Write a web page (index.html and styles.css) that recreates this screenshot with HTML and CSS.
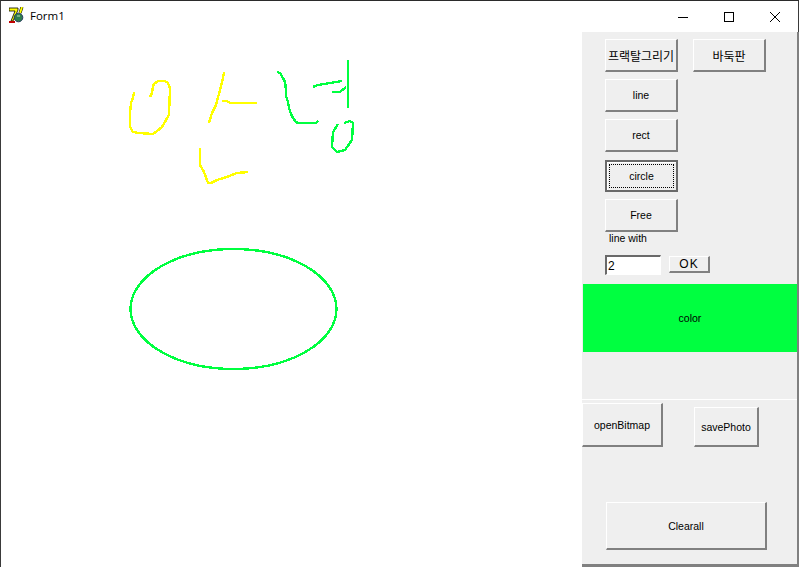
FILE: index.html
```html
<!DOCTYPE html>
<html>
    <head>
        <title>Form1</title>
        <link rel="stylesheet" href="styles.css">
    </head>
    <body>
        <div class="window">
            <div class="titleBar">
                <svg class="appIcon" width="17" height="17" viewBox="0 0 17 17">
                    <path d="M0 1H9V3L4 14H2L6 4H0Z" fill="#ffff00" stroke="#000" stroke-width="0.8" />
                    <path d="M0 15H6" stroke="#c00000" stroke-width="2" />
                    <path d="M13 0L11 6" stroke="#000" stroke-width="3" />
                    <path d="M13 0L11 6" stroke="#ffff00" stroke-width="2" />
                    <circle cx="9.5" cy="10.5" r="4.3" fill="#2f7f4f" stroke="#2a3a60" stroke-width="1" />
                    <path d="M8 9H11" stroke="#90c090" stroke-width="1.5" />
                </svg>
                <span class="titleText">Form1</span>
                <div class="winButtons">
                    <div class="winBtn">
                        <svg width="12" height="12" viewBox="0 0 12 12"><path d="M1 6.5H11" stroke="#000" /></svg>
                    </div>
                    <div class="winBtn">
                        <svg width="12" height="12" viewBox="0 0 12 12"><rect x="1.5" y="1.5" width="9" height="9" fill="none" stroke="#000" /></svg>
                    </div>
                    <div class="winBtn">
                        <svg width="12" height="12" viewBox="0 0 12 12"><path d="M1 1L11 11M11 1L1 11" stroke="#000" /></svg>
                    </div>
                </div>
            </div>
            <div class="client">
                <svg class="canvas" width="581" height="535" viewBox="1 32 581 535">
                    <g class="yellowLines">
                        <polyline points="134,92 133,98 131,103 130,113 130,127 133,132 139,133 153,134 157,131 162,127 166,120 169,115 170,88 168,83 165,81 158,81 154,84 153,86 152,93 150,97" />
                        <polyline points="224,72 223,78 220,90 216,105 212,113 209,123" />
                        <polyline points="222,101 227,101 230,103 257,103" />
                        <polyline points="200,148 200,165 204,172 208,183 211,183 217,180 227,177 237,173 248,172" />
                    </g>
                    <g class="greenLines">
                        <polyline points="277,72 280,73 283,78 285,82 286,90 286,96 288,102 289,108 291,114 293,118 296,122 298,123 316,123 318,121" />
                        <polyline points="313,87 318,85 342,81" />
                        <polyline points="332,92 340,92 346,87" />
                        <polyline points="348,60 348,108" />
                        <polyline points="338,124 333,132 332,147 337,152 345,150 352,140 353,123 350,121 344,123" />
                        <ellipse cx="233.5" cy="309" rx="103" ry="60" />
                    </g>
                </svg>
                <div class="panel">
                    <div class="toolPanel">
                        <div class="row">
                            <button class="btn btnTool btnKorean">프랙탈그리기</button>
                            <button class="btn btnTool btnKorean">바둑판</button>
                        </div>
                        <button class="btn btnTool">line</button>
                        <button class="btn btnTool">rect</button>
                        <button class="btn btnTool btnFocus"><span class="focusBox">circle</span></button>
                        <button class="btn btnTool">Free</button>
                        <div class="lineLabel">line with</div>
                        <div class="widthRow">
                            <input type="text" class="widthInput" value="2" />
                            <button class="btn btnOk">OK</button>
                        </div>
                        <div class="colorBox">color</div>
                    </div>
                    <div class="filePanel">
                        <div class="fileRow">
                            <button class="btn btnOpen">openBitmap</button>
                            <button class="btn btnSave">savePhoto</button>
                        </div>
                        <button class="btn btnClear">Clearall</button>
                    </div>
                </div>
            </div>
        </div>
    </body>
</html>
```

FILE: styles.css
```css
html, body{
    margin: 0;
    padding: 0;
}

body{
    width: 799px;
    height: 567px;
    overflow: hidden;
    background-color: #ffffff;
    font-family: "Liberation Sans", "Noto Sans CJK KR", sans-serif;
    font-size: 10.5px;
    color: #000000;
}

.window{
    box-sizing: border-box;
    width: 799px;
    height: 567px;
    display: flex;
    flex-direction: column;
    border-top: 1px solid #2b2b2b;
    border-left: 1px solid #3a3a3a;
    background-color: #ffffff;
}

.titleBar{
    height: 31px;
    flex: none;
    display: flex;
    align-items: center;
    padding-left: 8px;
    border-right: 1px solid #3a3a3a;
}

.appIcon{
    flex: none;
    margin: 0 4px 2px 0;
}

.titleText{
    margin-bottom: 2px;
    font-family: "Open Sans", "Noto Sans", sans-serif;
    font-size: 11.5px;
}

.winButtons{
    margin-left: auto;
    display: flex;
}

.winBtn{
    width: 46px;
    height: 31px;
    display: flex;
    align-items: center;
    justify-content: center;
}

.client{
    flex: 1;
    display: flex;
    min-height: 0;
}

.canvas{
    flex: none;
    display: block;
}

.canvas polyline, .canvas ellipse{
    fill: none;
    stroke-width: 2.4;
    stroke-linejoin: round;
    shape-rendering: crispEdges;
}

.yellowLines{
    stroke: #ffff00;
}

.greenLines{
    stroke: #00ff40;
}

.panel{
    box-sizing: border-box;
    width: 217px;
    flex: none;
    display: flex;
    flex-direction: column;
    background-color: #efefef;
    border-right: 2px solid #808080;
    border-bottom: 3px solid #808080;
}

.toolPanel{
    box-sizing: border-box;
    height: 368px;
    flex: none;
    padding-top: 7px;
    display: flex;
    flex-direction: column;
    border-bottom: 1px solid #ffffff;
}

.filePanel{
    flex: 1;
    display: flex;
    flex-direction: column;
}

.row{
    display: flex;
    gap: 15px;
}

.btn{
    box-sizing: border-box;
    padding: 0;
    font-family: "Liberation Sans", "Noto Sans CJK KR", sans-serif;
    font-size: 10.5px;
    color: #000000;
    background-color: #efefef;
    border-style: solid;
    border-width: 1px 2px 2px 1px;
    border-color: #ffffff #808080 #808080 #ffffff;
}

.btnTool{
    display: block;
    width: 73px;
    height: 33px;
    margin: 0 0 7px 23px;
}

.btnKorean{
    font-size: 12px;
    white-space: nowrap;
}

.row .btnTool + .btnTool{
    margin-left: 0;
}

.btnFocus{
    margin-top: 1px;
    height: 32px;
    border: 2px solid #696969;
    padding: 2px;
    box-shadow: inset 1px 1px 0 #ffffff;
}

.focusBox{
    display: flex;
    align-items: center;
    justify-content: center;
    height: 100%;
    border: 1px dotted #000000;
    box-sizing: border-box;
}

.lineLabel{
    margin: -8px 0 0 27px;
    height: 15px;
    line-height: 15px;
}

.widthRow{
    margin: 9px 0 0 23px;
    display: flex;
    align-items: flex-start;
}

.widthInput{
    box-sizing: border-box;
    width: 56px;
    height: 20px;
    padding: 0 1px;
    font-family: "Liberation Sans", sans-serif;
    font-size: 12px;
    background-color: #ffffff;
    border-style: solid;
    border-width: 2px 1px 1px 2px;
    border-color: #696969 #ffffff #ffffff #696969;
    outline: none;
}

.btnOk{
    width: 41px;
    height: 17px;
    margin: 1px 0 0 8px;
    font-size: 12px;
    letter-spacing: 1px;
}

.colorBox{
    margin: 9px 0 0 1px;
    height: 68px;
    display: flex;
    align-items: center;
    justify-content: center;
    background-color: #00ff40;
}

.fileRow{
    margin-top: 3px;
    display: flex;
    align-items: flex-end;
}

.btnOpen{
    width: 81px;
    height: 44px;
}

.btnSave{
    width: 65px;
    height: 40px;
    margin-left: 31px;
}

.btnClear{
    width: 161px;
    height: 48px;
    margin: 55px 0 0 24px;
}
```
